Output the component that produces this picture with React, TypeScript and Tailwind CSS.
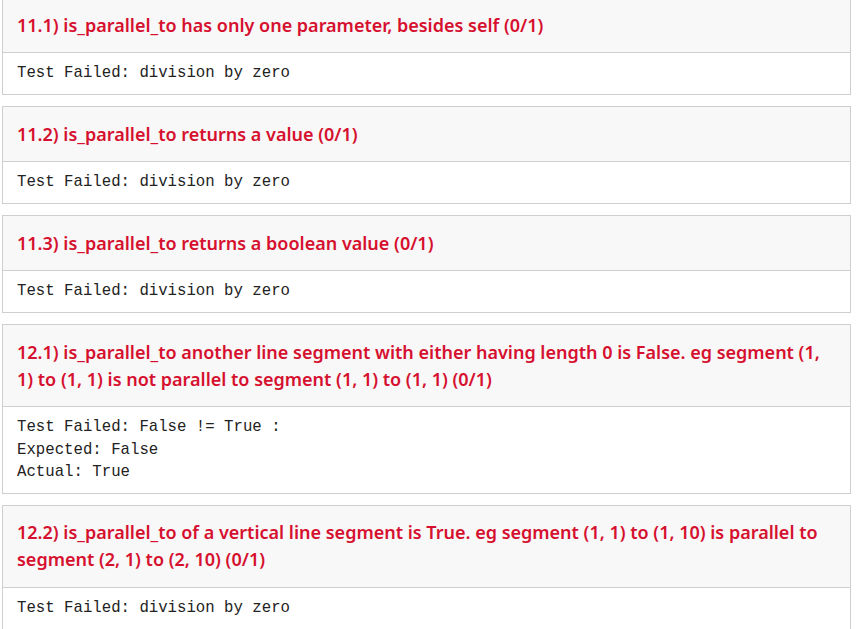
const results = [
  {
    title: '11.1) is_parallel_to has only one parameter, besides self (0/1)',
    output: 'Test Failed: division by zero',
  },
  {
    title: '11.2) is_parallel_to returns a value (0/1)',
    output: 'Test Failed: division by zero',
  },
  {
    title: '11.3) is_parallel_to returns a boolean value (0/1)',
    output: 'Test Failed: division by zero',
  },
  {
    title:
      '12.1) is_parallel_to another line segment with either having length 0 is False. eg segment (1, 1) to (1, 1) is not parallel to segment (1, 1) to (1, 1) (0/1)',
    output: 'Test Failed: False != True :\nExpected: False\nActual: True',
  },
  {
    title:
      '12.2) is_parallel_to of a vertical line segment is True. eg segment (1, 1) to (1, 10) is parallel to segment (2, 1) to (2, 10) (0/1)',
    output: 'Test Failed: division by zero',
  },
]

export default function App() {
  return (
    <div className="bg-white min-h-screen overflow-hidden">
      <div className="ml-[2px] mt-[-3px] w-[849px] flex flex-col gap-[11px]">
        {results.map((r) => (
          <div key={r.title} className="border border-[#cfcfcf] bg-white">
            <div className="bg-[#f8f8f8] border-b border-[#cfcfcf] px-[14px] py-[13.5px]">
              <h3 className="text-[18px] leading-[27px] font-semibold text-[#d6102f] font-['Noto_Sans','Open_Sans',sans-serif] pr-[10px]">
                {r.title}
              </h3>
            </div>
            <pre className="px-[14px] py-[9.3px] text-[15.7px] leading-[22.4px] text-[#222] font-['Liberation_Mono','Courier_New',monospace] whitespace-pre-wrap">
              {r.output}
            </pre>
          </div>
        ))}
      </div>
    </div>
  )
}
